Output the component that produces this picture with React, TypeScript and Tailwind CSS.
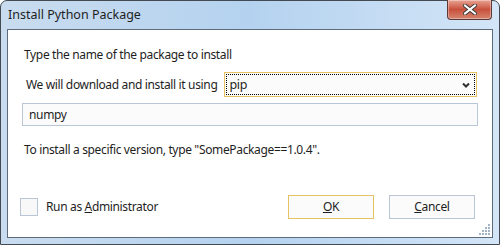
const font = { fontFamily: '"Noto Sans", "Liberation Sans", sans-serif' };

function CloseButton() {
  return (
    <div className="-mt-px mr-[7px] flex h-[20px] w-[45px] items-center justify-center rounded-b-[4px] border border-t-0 border-[#5b3a36] bg-gradient-to-b from-[#e8a393] via-[#c8503c] to-[#d4846f] shadow-[inset_0_0_0_1px_rgba(255,255,255,0.35)]">
      <svg width="14" height="11" viewBox="0 0 14 11">
        <path d="M2 1.5 L12 9.5 M12 1.5 L2 9.5" stroke="#3b3b3b" strokeWidth="4" strokeLinecap="square" />
        <path d="M2 1.5 L12 9.5 M12 1.5 L2 9.5" stroke="#ffffff" strokeWidth="2" strokeLinecap="square" />
      </svg>
    </div>
  );
}

// size grip dots in the bottom right corner
function Grip() {
  const dots: [number, number][] = [[9, 0], [6, 3], [9, 3], [3, 6], [6, 6], [9, 6], [0, 9], [3, 9], [6, 9], [9, 9]];
  return (
    <svg width="11" height="11" viewBox="0 0 11 11" className="absolute bottom-[2px] right-[2px]">
      {dots.map(([x, y], i) => (
        <rect key={i} x={x} y={y} width="2" height="2" fill="#a4b4c8" />
      ))}
    </svg>
  );
}

export default function App() {
  return (
    <div className="h-[245px] w-[500px] bg-white" style={font}>
      <div className="flex h-[245px] w-[500px] flex-col rounded-t-[7px] border border-[#434a52] bg-gradient-to-r from-[#c9dcef] via-[#b4d2ef] to-[#d3e5f7]">
        {/* title bar */}
        <div className="flex h-[28px] items-start justify-between">
          <span className="pl-[7px] pt-[6px] text-[12.5px] leading-[16px] text-[#1e1e1e]">Install Python Package</span>
          <CloseButton />
        </div>

        {/* client area */}
        <div className="relative mx-[6px] mb-[6px] flex flex-1 flex-col border border-[#5e6b7a] bg-white text-[12px] leading-[16px] tracking-[-0.35px] text-[#1e1e1e]">
          <div className="pl-[16px] pt-[17px]">Type the name of the package to install</div>

          <div className="mt-[9px] flex items-center pl-[18px] pr-[15px]">
            <span className="mr-[7px]">We will download and install it using</span>
            <div className="flex h-[25px] flex-1 items-center border border-[#e5c365] bg-[#fbfbfb] p-[1px]">
              <div className="flex h-full w-full items-center justify-between border border-dotted border-black pl-[2px] pr-[4px]">
                <span className="text-[12.5px]">pip</span>
                <svg width="8" height="6" viewBox="0 0 8 6">
                  <path d="M1 1.5 L4 4.5 L7 1.5" fill="none" stroke="#303030" strokeWidth="2" />
                </svg>
              </div>
            </div>
          </div>

          <div className="mx-[14px] mt-[6px] flex h-[23px] items-center border border-[#b9c6d6] bg-[#fbfbfb] pl-[6px]">
            numpy
          </div>

          <div className="pl-[16px] pt-[16px]">To install a specific version, type "SomePackage==1.0.4".</div>

          <div className="mt-auto mb-[18px] flex items-center pl-[12px] pr-[17px]">
            <div className="h-[18px] w-[18px] border border-[#b9c6d6] bg-[#f8f8f8]" />
            <span className="ml-[8px]">
              Run as <span className="underline">A</span>dministrator
            </span>
            <div className="ml-auto flex gap-[15px]">
              <button className="flex h-[24px] w-[86px] items-center justify-center border border-[#e5c365] bg-[#fbfbfb]">
                <span><span className="underline">O</span>K</span>
              </button>
              <button className="flex h-[24px] w-[86px] items-center justify-center border border-[#b9c6d6] bg-[#fbfbfb]">
                <span><span className="underline">C</span>ancel</span>
              </button>
            </div>
          </div>
          <Grip />
        </div>
      </div>
    </div>
  );
}
